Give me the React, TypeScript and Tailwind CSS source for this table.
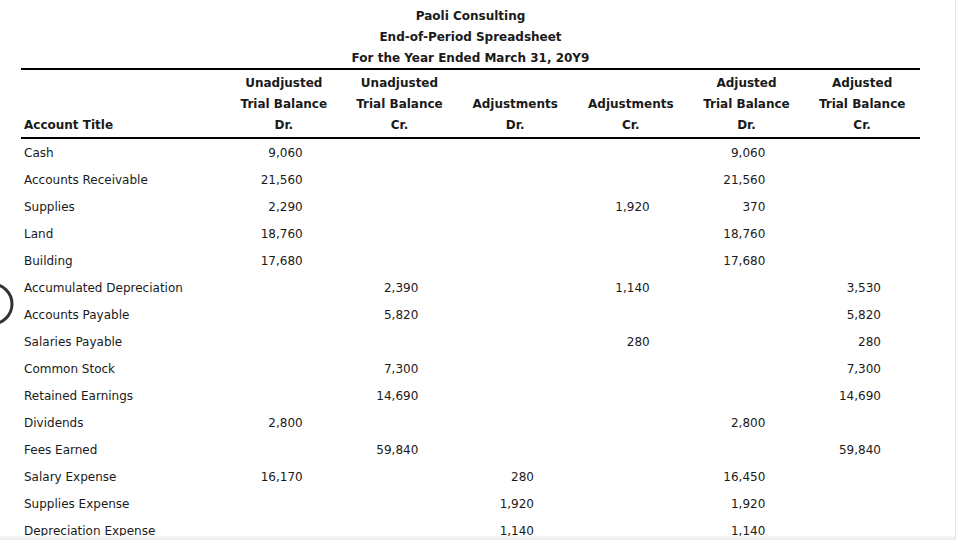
import React from "react";

const rows: [string, string[]][] = [
  ["Cash", ["9,060", "", "", "", "9,060", ""]],
  ["Accounts Receivable", ["21,560", "", "", "", "21,560", ""]],
  ["Supplies", ["2,290", "", "", "1,920", "370", ""]],
  ["Land", ["18,760", "", "", "", "18,760", ""]],
  ["Building", ["17,680", "", "", "", "17,680", ""]],
  ["Accumulated Depreciation", ["", "2,390", "", "1,140", "", "3,530"]],
  ["Accounts Payable", ["", "5,820", "", "", "", "5,820"]],
  ["Salaries Payable", ["", "", "", "280", "", "280"]],
  ["Common Stock", ["", "7,300", "", "", "", "7,300"]],
  ["Retained Earnings", ["", "14,690", "", "", "", "14,690"]],
  ["Dividends", ["2,800", "", "", "", "2,800", ""]],
  ["Fees Earned", ["", "59,840", "", "", "", "59,840"]],
  ["Salary Expense", ["16,170", "", "280", "", "16,450", ""]],
  ["Supplies Expense", ["", "", "1,920", "", "1,920", ""]],
  ["Depreciation Expense", ["", "", "1,140", "", "1,140", ""]],
];

const headers: string[][] = [
  ["Unadjusted", "Trial Balance", "Dr."],
  ["Unadjusted", "Trial Balance", "Cr."],
  ["", "Adjustments", "Dr."],
  ["", "Adjustments", "Cr."],
  ["Adjusted", "Trial Balance", "Dr."],
  ["Adjusted", "Trial Balance", "Cr."],
];

export default function App() {
  return (
    <div
      className="relative w-[956px] h-[540px] overflow-hidden bg-white text-[#1a1a1a] border-r border-[#e6e6e6]"
      style={{ fontFamily: "Verdana, 'DejaVu Sans', sans-serif" }}
    >
      <div className="ml-[21px] w-[899px] pt-[6px]">
        <div className="text-center font-bold text-[12px] leading-[21px]">
          <div>Paoli Consulting</div>
          <div>End-of-Period Spreadsheet</div>
          <div>For the Year Ended March 31, 20Y9</div>
        </div>
        <div className="-mt-[1px] h-[2px] bg-black" />
        <div className="grid grid-cols-[205px_repeat(6,1fr)] text-[12px] leading-[21px] font-bold pt-[3px] pb-[1px]">
          <div className="pl-[3px] flex flex-col justify-end">
            <div>Account Title</div>
          </div>
          {headers.map((h, i) => (
            <div key={i} className="text-center">
              <div className="h-[21px]">{h[0]}</div>
              <div className="h-[21px]">{h[1]}</div>
              <div className="h-[21px]">{h[2]}</div>
            </div>
          ))}
        </div>
        <div className="h-[2px] bg-black" />
        <div className="text-[12px]">
          {rows.map(([title, vals]) => (
            <div
              key={title}
              className="grid grid-cols-[205px_repeat(6,1fr)] h-[27px] items-center"
            >
              <div className="pl-[3px]">{title}</div>
              {vals.map((v, j) => (
                <div key={j} className="text-right pr-[39px]">
                  {v}
                </div>
              ))}
            </div>
          ))}
        </div>
      </div>
      <svg
        className="absolute left-0 top-[280px]"
        width="16"
        height="48"
        viewBox="0 0 16 48"
      >
        <circle cx="-8" cy="24" r="20" fill="none" stroke="#333" strokeWidth="3" />
      </svg>
      <div className="absolute left-0 right-0 bottom-0 h-[4px] bg-gradient-to-b from-[#f8f8f8] to-[#ebebeb]" />
    </div>
  );
}
